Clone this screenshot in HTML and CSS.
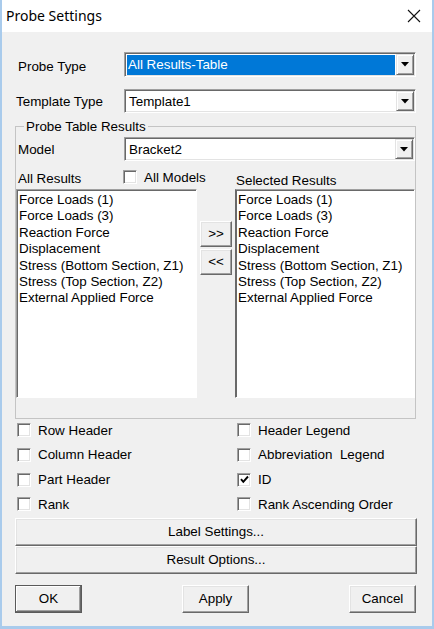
FILE: index.html
```html
<!DOCTYPE html>
<html>
<head>
<meta charset="utf-8">
<title>Probe Settings</title>
<link rel="stylesheet" href="styles.css">
</head>
<body>
<div class="window">
  <div class="titlebar">
    <span class="title">Probe Settings</span>
    <svg class="close" width="14" height="14" viewBox="0 0 14 14"><path d="M1 1 L13 13 M13 1 L1 13" stroke="#111" stroke-width="1.1" fill="none"/></svg>
  </div>
  <div class="client">
    <div class="row row-probe">
      <span class="lbl lbl-probe">Probe Type</span>
      <div class="combo combo-25">
        <span class="value"><span class="sel">All Results-Table</span></span>
        <span class="drop"><svg width="8" height="5" viewBox="0 0 8 5"><path d="M0 0 H8 L4 4.5 Z" fill="#000"/></svg></span>
      </div>
    </div>
    <div class="row row-template">
      <span class="lbl lbl-template">Template Type</span>
      <div class="combo combo-24">
        <span class="value"><span class="plain">Template1</span></span>
        <span class="drop"><svg width="8" height="5" viewBox="0 0 8 5"><path d="M0 0 H8 L4 4.5 Z" fill="#000"/></svg></span>
      </div>
    </div>
    <fieldset class="group">
      <legend class="legend">Probe Table Results</legend>
      <div class="row row-model">
        <span class="lbl lbl-model">Model</span>
        <div class="combo combo-24">
          <span class="value"><span class="plain">Bracket2</span></span>
          <span class="drop"><svg width="8" height="5" viewBox="0 0 8 5"><path d="M0 0 H8 L4 4.5 Z" fill="#000"/></svg></span>
        </div>
      </div>
      <div class="lists">
        <div class="col">
          <div class="head head-left">
            <span class="head-all">All Results</span>
            <span class="chk-wrap"><span class="chk"></span><span class="chk-text">All Models</span></span>
          </div>
          <div class="listbox">
            <div class="item">Force Loads (1)</div>
            <div class="item">Force Loads (3)</div>
            <div class="item">Reaction Force</div>
            <div class="item">Displacement</div>
            <div class="item">Stress (Bottom Section, Z1)</div>
            <div class="item">Stress (Top Section, Z2)</div>
            <div class="item">External Applied Force</div>
          </div>
        </div>
        <div class="mover">
          <button class="btn btn-move">&gt;&gt;</button>
          <button class="btn btn-move">&lt;&lt;</button>
        </div>
        <div class="col">
          <div class="head head-right"><span class="head-sel">Selected Results</span></div>
          <div class="listbox listbox-right">
            <div class="item">Force Loads (1)</div>
            <div class="item">Force Loads (3)</div>
            <div class="item">Reaction Force</div>
            <div class="item">Displacement</div>
            <div class="item">Stress (Bottom Section, Z1)</div>
            <div class="item">Stress (Top Section, Z2)</div>
            <div class="item">External Applied Force</div>
          </div>
        </div>
      </div>
    </fieldset>
    <div class="options">
      <div class="opt"><span class="chk"></span><span class="opt-text">Row Header</span></div>
      <div class="opt"><span class="chk"></span><span class="opt-text">Header Legend</span></div>
      <div class="opt"><span class="chk"></span><span class="opt-text">Column Header</span></div>
      <div class="opt"><span class="chk"></span><span class="opt-text">Abbreviation&nbsp; Legend</span></div>
      <div class="opt"><span class="chk"></span><span class="opt-text">Part Header</span></div>
      <div class="opt"><span class="chk checked"><svg width="11" height="11" viewBox="0 0 11 11"><path d="M2 5.2 L4.3 7.8 L9 2.5" stroke="#000" stroke-width="1.9" fill="none"/></svg></span><span class="opt-text">ID</span></div>
      <div class="opt"><span class="chk"></span><span class="opt-text">Rank</span></div>
      <div class="opt"><span class="chk"></span><span class="opt-text">Rank Ascending Order</span></div>
    </div>
    <div class="wide">
      <button class="btn btn-wide">Label Settings...</button>
      <button class="btn btn-wide">Result Options...</button>
    </div>
    <div class="actions">
      <button class="btn btn-act btn-default">OK</button>
      <button class="btn btn-act">Apply</button>
      <button class="btn btn-act">Cancel</button>
    </div>
  </div>
</div>
</body>
</html>
```
FILE: styles.css
```css
html, body {
  margin: 0;
  padding: 0;
  background: #a9cbec;
}
.window {
  box-sizing: border-box;
  width: 434px;
  height: 629px;
  border: 2px solid #a9cbec;
  border-top-width: 0;
  border-bottom-width: 3px;
  display: flex;
  flex-direction: column;
  font-family: "Liberation Sans", Arial, sans-serif;
  font-size: 13.4px;
  color: #000;
}
.titlebar {
  height: 32px;
  flex: none;
  background: #fff;
  display: flex;
  align-items: center;
  justify-content: space-between;
  padding: 0 11px 0 4px;
}
.title {
  font-family: "Noto Sans", sans-serif;
  font-size: 14px;
  line-height: 16px;
}
.close {
  display: block;
}
.client {
  flex: 1;
  background: #f0f0f0;
  padding: 20px 16px 0 13px;
  display: flex;
  flex-direction: column;
}
.row {
  display: flex;
  align-items: center;
}
.lbl {
  flex: none;
  box-sizing: border-box;
  width: 109px;
  line-height: 15px;
}
.lbl-probe { padding-left: 3px; padding-top: 3px; }
.lbl-template { padding-left: 1px; padding-top: 1px; }
.lbl-model { width: 108px; padding-left: 2px; padding-top: 1px; }
.row-template { margin-top: 12px; }
.combo {
  flex: 1;
  box-sizing: border-box;
  display: flex;
  background: #fff;
  border: 1px solid;
  border-color: #a0a0a0 #fff #fff #a0a0a0;
  box-shadow: inset 1px 1px #696969, inset -1px -1px #e3e3e3;
  padding: 1px;
}
.combo-25 { height: 25px; }
.combo-24 { height: 24px; }
.value {
  flex: 1;
  display: flex;
  padding: 1px 1px 0 1px;
}
.sel {
  flex: 1;
  background: #0078d7;
  color: #fff;
  line-height: 19px;
  padding-left: 1px;
}
.plain {
  line-height: 20px;
  padding-left: 2px;
}
.drop {
  flex: none;
  width: 18px;
  box-sizing: border-box;
  background: #f0f0f0;
  border: 1px solid;
  border-color: #e3e3e3 #696969 #696969 #e3e3e3;
  box-shadow: inset 1px 1px #fff, inset -1px -1px #a0a0a0;
  display: flex;
  align-items: center;
  justify-content: center;
}
.drop svg { display: block; }
.group {
  margin: 6px 0 0 0;
  padding: 3px 0 20px 0;
  border: 1px solid #c4c4c4;
  min-width: 0;
}
.legend {
  margin-left: 8px;
  padding: 0 2px;
  line-height: 15px;
}
.lists {
  display: grid;
  grid-template-columns: 181px 38px 1fr;
}
.col {
  display: flex;
  flex-direction: column;
  min-width: 0;
}
.head {
  height: 28px;
  box-sizing: border-box;
  display: flex;
  white-space: nowrap;
}
.head-left {
  align-items: center;
  padding-top: 6px;
}
.head-all {
  width: 107px;
  padding-left: 2px;
  box-sizing: border-box;
  line-height: 15px;
  flex: none;
}
.chk-wrap {
  display: flex;
  align-items: center;
  margin-top: -3px;
  flex: none;
}
.chk-text { margin-left: 7px; margin-top: 2px; line-height: 15px; }
.head-right {
  align-items: flex-end;
  padding-bottom: 1px;
  padding-left: 1px;
}
.head-sel { line-height: 15px; }
.chk {
  flex: none;
  box-sizing: border-box;
  width: 14px;
  height: 14px;
  background: #fff;
  border: 1px solid;
  border-color: #a0a0a0 #fff #fff #a0a0a0;
  box-shadow: inset 1px 1px #696969, inset -1px -1px #e3e3e3;
  display: flex;
  align-items: center;
  justify-content: center;
}
.chk svg { display: block; }
.listbox {
  box-sizing: border-box;
  height: 209px;
  background: #fff;
  border: 1px solid;
  border-color: #a0a0a0 #fff #fff #a0a0a0;
  box-shadow: inset 1px 1px #696969;
  padding: 2px 0 0 2px;
  overflow: hidden;
}
.listbox-right {
  border-left-color: #696969;
}
.item {
  line-height: 16.4px;
  white-space: nowrap;
}
.mover {
  display: flex;
  flex-direction: column;
  gap: 2px;
  padding: 60px 0 0 3px;
}
.btn {
  font-family: "Liberation Sans", Arial, sans-serif;
  font-size: 13.4px;
  color: #000;
  background: #f0f0f0;
  margin: 0;
  padding: 0;
  box-sizing: border-box;
  border: 1px solid;
  border-color: #fff #696969 #696969 #fff;
  box-shadow: inset -1px -1px #a0a0a0, inset 1px 1px #e3e3e3;
}
.btn-move {
  width: 32px;
  height: 26px;
  line-height: 20px;
}
.options {
  margin-top: -1px;
  display: grid;
  grid-template-columns: 220px 1fr;
  grid-auto-rows: 24.67px;
  padding-left: 2px;
}
.opt {
  display: flex;
  align-items: center;
  white-space: nowrap;
}
.opt-text {
  margin-left: 7px;
  line-height: 15px;
}
.wide {
  margin-top: 1px;
  display: flex;
  flex-direction: column;
}
.btn-wide {
  width: 402px;
  height: 28px;
}
.actions {
  margin-top: 11px;
  display: flex;
  justify-content: space-between;
}
.btn-act {
  width: 67px;
  height: 28px;
}
.btn-default {
  border-color: #5a5a5a;
  box-shadow: inset -1px -1px #696969, inset 1px 1px #fff, inset -2px -2px #a0a0a0;
}
```
